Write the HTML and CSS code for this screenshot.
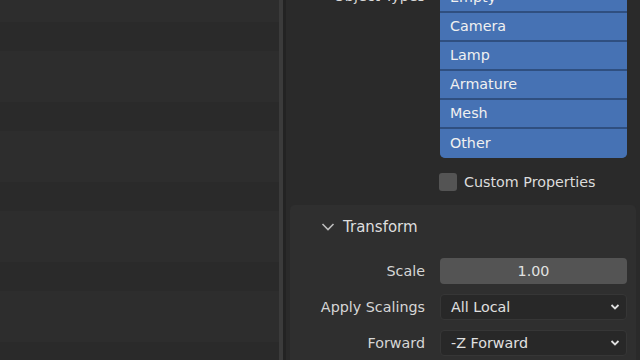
FILE: index.html
```html
<!DOCTYPE html>
<html>
<head>
<meta charset="utf-8">
<link rel="stylesheet" href="styles.css">
</head>
<body>
<div class="app">
  <div class="files"></div>
  <div class="divider"><div class="div-light"></div><div class="div-dark"></div></div>
  <div class="props">
    <div class="prop-row types">
      <div class="label">Object Types</div>
      <div class="type-list">
        <div class="type">Empty</div>
        <div class="type">Camera</div>
        <div class="type">Lamp</div>
        <div class="type">Armature</div>
        <div class="type">Mesh</div>
        <div class="type last">Other</div>
      </div>
    </div>
    <div class="prop-row check-row">
      <div class="label"></div>
      <div class="check"><span class="box"></span><span>Custom Properties</span></div>
    </div>
    <div class="panel">
      <div class="panel-head">
        <svg class="caret" width="14" height="10" viewBox="0 0 14 10"><path d="M1.5 2 L7 7.5 L12.5 2" fill="none" stroke="#bdbdbd" stroke-width="1.6"/></svg>
        <span>Transform</span>
      </div>
      <div class="panel-row">
        <div class="plabel">Scale</div>
        <div class="field num">1.00</div>
      </div>
      <div class="panel-row">
        <div class="plabel">Apply Scalings</div>
        <div class="field drop"><span>All Local</span><svg width="10" height="8" viewBox="0 0 10 8"><path d="M1.5 2 L5 5.5 L8.5 2" fill="none" stroke="#e0e0e0" stroke-width="1.8"/></svg></div>
      </div>
      <div class="panel-row">
        <div class="plabel">Forward</div>
        <div class="field drop"><span>-Z Forward</span><svg width="10" height="8" viewBox="0 0 10 8"><path d="M1.5 2 L5 5.5 L8.5 2" fill="none" stroke="#e0e0e0" stroke-width="1.8"/></svg></div>
      </div>
    </div>
  </div>
</div>
</body>
</html>
```
FILE: styles.css
```css
html, body {
  margin: 0;
  padding: 0;
  width: 640px;
  height: 360px;
  overflow: hidden;
  background: #2b2b2b;
  font-family: "DejaVu Sans", "Noto Sans", sans-serif;
  font-size: 14.3px;
  color: #d9d9d9;
}
.app {
  display: flex;
  width: 640px;
  height: 360px;
}
.files {
  width: 279px;
  height: 360px;
  background: repeating-linear-gradient(to bottom,
    #2d2d2d 0px, #2d2d2d 22px,
    #2a2a2a 22px, #2a2a2a 51px,
    #2d2d2d 51px, #2d2d2d 80px);
}
.divider {
  display: flex;
  width: 7px;
}
.div-light { width: 4px; background: #3b3b3b; }
.div-dark { width: 3px; background: #232323; }
.props {
  flex: 1;
  background: #2a2a2a;
  display: flex;
  flex-direction: column;
}
.prop-row {
  display: grid;
  grid-template-columns: 154px 187px;
}
.label {
  text-align: right;
  padding-right: 15px;
  line-height: 27px;
  color: #d9d9d9;
}
.types {
  margin-top: -16px;
}
.types .label { line-height: 24px; }
.type-list {
  display: flex;
  flex-direction: column;
  gap: 2px;
  background: #2f4f80;
  border-radius: 0 0 5px 5px;
}
.type {
  height: 27px;
  line-height: 27px;
  background: #4672b4;
  color: #f0f0f0;
  padding-left: 10px;
}
.type.last {
  height: 29px;
  line-height: 28px;
  border-radius: 0 0 5px 5px;
}
.check-row { margin-top: 13px; }
.check {
  display: flex;
  align-items: center;
  gap: 7px;
  height: 22px;
  color: #dcdcdc;
}
.box {
  width: 18px;
  height: 18px;
  border-radius: 3px;
  background: #545454;
  margin-left: -1px;
}
.panel {
  margin-top: 12px;
  margin-left: 4px;
  margin-right: 4px;
  flex: 1;
  background: #2f2f2f;
  border-radius: 5px 5px 0 0;
}
.panel-head {
  height: 43px;
  display: flex;
  align-items: center;
  gap: 8px;
  padding-left: 31px;
  color: #dedede;
  font-size: 15px;
}
.caret { margin-top: 1px; }
.panel-row {
  display: grid;
  grid-template-columns: 150px 187px;
  margin-top: 10px;
  height: 26px;
}
.panel-row + .panel-row { margin-top: 10px; }
.plabel {
  text-align: right;
  padding-right: 15px;
  line-height: 26px;
  color: #d6d6d6;
}
.field {
  border-radius: 4px;
  height: 26px;
  line-height: 26px;
  box-sizing: border-box;
}
.num {
  background: #545454;
  text-align: center;
  color: #e2e2e2;
}
.drop {
  background: #282828;
  border: 1px solid #363636;
  display: flex;
  justify-content: space-between;
  align-items: center;
  padding: 0 6px 0 10px;
  color: #e0e0e0;
}
```
